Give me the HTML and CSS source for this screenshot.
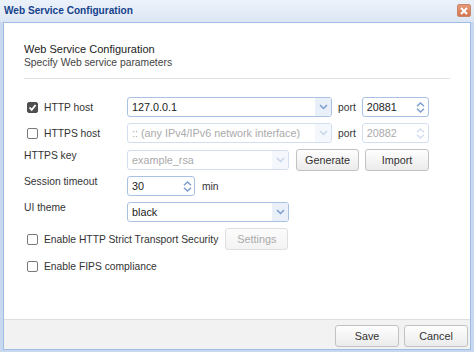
FILE: index.html
```html
<!DOCTYPE html>
<html lang="en">
<head>
    <meta charset="UTF-8">
    <title>Web Service Configuration</title>
    <link rel="stylesheet" href="styles.css">
</head>
<body>
    <div class="window">
        <div class="titlebar">
            <span class="title">Web Service Configuration</span>
            <span class="close">
                <svg width="8" height="8" viewBox="0 0 8 8"><path d="M1 1L7 7M7 1L1 7" stroke="#fff" stroke-width="2"/></svg>
            </span>
        </div>

        <div class="panel">
            <div class="content">
                <div class="intro">
                    <div class="intro-title">Web Service Configuration</div>
                    <div class="intro-sub">Specify Web service parameters</div>
                </div>

                <div class="form">
                    <div class="row">
                        <label class="label check-label">
                            <span class="checkbox checked"><svg width="9" height="9" viewBox="0 0 9 9"><path d="M1.5 4.5L3.7 6.8L7.6 2" stroke="#fff" stroke-width="1.8" fill="none"/></svg></span>HTTP host
                        </label>
                        <div class="select wide">
                            <span class="value">127.0.0.1</span>
                            <span class="arrow"><svg width="9" height="6" viewBox="0 0 9 6"><path d="M1 1L4.5 4.5L8 1" stroke="#7c9dd0" stroke-width="1.5" fill="none"/></svg></span>
                        </div>
                        <span class="unit">port</span>
                        <div class="spinner port">
                            <span class="value">20881</span>
                            <span class="spin">
                                <svg width="9" height="5" viewBox="0 0 9 5"><path d="M1 4.2L4.5 1L8 4.2" stroke="#7c9dd0" stroke-width="1.5" fill="none"/></svg>
                                <svg width="9" height="5" viewBox="0 0 9 5"><path d="M1 0.8L4.5 4L8 0.8" stroke="#7c9dd0" stroke-width="1.5" fill="none"/></svg>
                            </span>
                        </div>
                    </div>

                    <div class="row">
                        <label class="label check-label">
                            <span class="checkbox"></span>HTTPS host
                        </label>
                        <div class="select wide disabled">
                            <span class="value">:: (any IPv4/IPv6 network interface)</span>
                            <span class="arrow"><svg width="9" height="6" viewBox="0 0 9 6"><path d="M1 1L4.5 4.5L8 1" stroke="#c5d4ea" stroke-width="1.5" fill="none"/></svg></span>
                        </div>
                        <span class="unit">port</span>
                        <div class="spinner port disabled">
                            <span class="value">20882</span>
                            <span class="spin">
                                <svg width="9" height="5" viewBox="0 0 9 5"><path d="M1 4.2L4.5 1L8 4.2" stroke="#d3deee" stroke-width="1.5" fill="none"/></svg>
                                <svg width="9" height="5" viewBox="0 0 9 5"><path d="M1 0.8L4.5 4L8 0.8" stroke="#d3deee" stroke-width="1.5" fill="none"/></svg>
                            </span>
                        </div>
                    </div>

                    <div class="row row-key">
                        <span class="label top-label">HTTPS key</span>
                        <div class="select medium disabled">
                            <span class="value">example_rsa</span>
                            <span class="arrow"><svg width="9" height="6" viewBox="0 0 9 6"><path d="M1 1L4.5 4.5L8 1" stroke="#c5d4ea" stroke-width="1.5" fill="none"/></svg></span>
                        </div>
                        <button class="btn btn-generate">Generate</button>
                        <button class="btn btn-import">Import</button>
                    </div>

                    <div class="row">
                        <span class="label top-label">Session timeout</span>
                        <div class="spinner timeout">
                            <span class="value">30</span>
                            <span class="spin">
                                <svg width="9" height="5" viewBox="0 0 9 5"><path d="M1 4.2L4.5 1L8 4.2" stroke="#7c9dd0" stroke-width="1.5" fill="none"/></svg>
                                <svg width="9" height="5" viewBox="0 0 9 5"><path d="M1 0.8L4.5 4L8 0.8" stroke="#7c9dd0" stroke-width="1.5" fill="none"/></svg>
                            </span>
                        </div>
                        <span class="unit unit-min">min</span>
                    </div>

                    <div class="row">
                        <span class="label top-label">UI theme</span>
                        <div class="select medium">
                            <span class="value">black</span>
                            <span class="arrow"><svg width="9" height="6" viewBox="0 0 9 6"><path d="M1 1L4.5 4.5L8 1" stroke="#7c9dd0" stroke-width="1.5" fill="none"/></svg></span>
                        </div>
                    </div>

                    <div class="row row-btn">
                        <label class="check-label">
                            <span class="checkbox"></span>Enable HTTP Strict Transport Security
                        </label>
                        <button class="btn btn-settings" disabled>Settings</button>
                    </div>

                    <div class="row row-last">
                        <label class="check-label">
                            <span class="checkbox"></span>Enable FIPS compliance
                        </label>
                    </div>
                </div>
            </div>

            <div class="footer">
                <button class="btn btn-footer">Save</button>
                <button class="btn btn-footer">Cancel</button>
            </div>
        </div>
    </div>
</body>
</html>
```

FILE: styles.css
```css
html, body { margin: 0; padding: 0; }
body { width: 474px; height: 352px; overflow: hidden; font-family: "Liberation Sans", Arial, sans-serif; font-size: 10.3px; color: #333; background: #c8d9ef; }

.window { display: flex; flex-direction: column; height: 352px; }

.titlebar { height: 22px; flex: none; display: flex; align-items: center; justify-content: space-between; padding: 0 3px 2px 4px; box-sizing: border-box; background: linear-gradient(#ecf2fb, #dce6f4); }
.title { font-size: 10.1px; font-weight: bold; color: #15428b; }
.close { width: 14px; height: 13px; margin-top: 1px; display: flex; align-items: center; justify-content: center; background: linear-gradient(#e69a78, #d27552); border-radius: 2px; border: 1px solid #c9866a; box-sizing: border-box; }

.panel { height: 328px; margin: 0 3px; flex: none; display: flex; flex-direction: column; background: #fff; border: 1px solid #9fbde3; box-sizing: border-box; }
.content { flex: 1; padding: 20px 20px 0 20px; }

.intro { line-height: 13px; padding-bottom: 9px; border-bottom: 1px solid #e3e3e3; margin-bottom: 18px; }
.intro-title { font-size: 11px; color: #222; }
.intro-sub { font-size: 10.3px; color: #444; }

.form { display: flex; flex-direction: column; gap: 6px; }
.row { display: flex; align-items: center; height: 20px; }
.row-key { margin-top: 1px; }
.row-btn { height: 22px; }
.row-last { margin-top: 3px; height: 14px; }

.label { width: 103px; flex: none; }
.top-label { align-self: flex-start; line-height: 13px; margin-top: -1px; }
.check-label { display: flex; align-items: center; padding-left: 3px; box-sizing: border-box; }
.checkbox { width: 11px; height: 11px; margin-right: 6px; flex: none; box-sizing: border-box; border: 1px solid #7a7a7a; border-radius: 2px; background: #fff; display: flex; align-items: center; justify-content: center; }
.checkbox.checked { background: #4f4f4f; border-color: #4f4f4f; }

.select, .spinner { height: 20px; box-sizing: border-box; border: 1px solid #a9c2e4; border-radius: 3px; background: #fff; display: flex; align-items: center; flex: none; }
.select .value, .spinner .value { flex: 1; padding-left: 4px; white-space: nowrap; overflow: hidden; color: #222; font-size: 10.8px; }
.select .arrow { width: 16px; height: 18px; display: flex; align-items: center; justify-content: center; background: #e9f0fa; border-radius: 0 2px 2px 0; }
.spinner .spin { width: 14px; display: flex; flex-direction: column; align-items: center; gap: 1px; }
.select.disabled, .spinner.disabled { border-color: #d3dff0; }
.disabled .value { color: #aaa; }
.select.disabled .arrow { background: #f4f7fc; }

.wide { width: 205px; }
.medium { width: 162px; }
.port { width: 67px; }
.timeout { width: 68px; }

.unit { margin: 0 6px; color: #333; }
.unit-min { margin-left: 7px; }

.btn { height: 22px; flex: none; box-sizing: border-box; border: 1px solid #c2c2c2; border-radius: 3px; background: linear-gradient(#fefefe, #ebebeb); font-family: "Liberation Sans", Arial, sans-serif; font-size: 10.8px; color: #333; padding: 0; }
.btn-generate { width: 63px; margin-left: 7px; }
.btn-import { width: 64px; margin-left: 6px; }
.btn-settings { width: 63px; margin-left: 7px; color: #aaa; border-color: #dedede; background: linear-gradient(#fcfcfc, #f3f3f3); }

.footer { height: 30px; flex: none; box-sizing: border-box; border-top: 1px solid #dedede; background: #f2f2f2; display: flex; justify-content: flex-end; align-items: flex-start; gap: 5px; padding: 5px 2px 0 0; }
.btn-footer { width: 64px; }
```
